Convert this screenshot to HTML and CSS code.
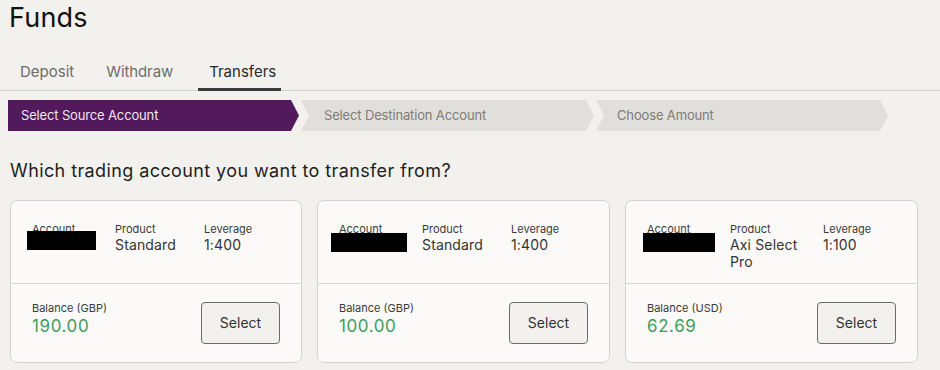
FILE: index.html
```html
<!DOCTYPE html>
<html>
<head>
<meta charset="utf-8">
<link rel="stylesheet" href="styles.css">
</head>
<body>
<div class="page">
  <h1 class="title">Funds</h1>
  <nav class="tabs">
    <span class="tab">Deposit</span>
    <span class="tab">Withdraw</span>
    <span class="tab active">Transfers</span>
  </nav>
  <div class="steps">
    <div class="step step-first active">Select Source Account</div>
    <div class="step step-mid">Select Destination Account</div>
    <div class="step step-last">Choose Amount</div>
  </div>
  <h2 class="question">Which trading account you want to transfer from?</h2>
  <div class="cards">
    <div class="card">
      <div class="card-top">
        <div class="cell acc">
          <div class="label">Account</div>
          <div class="redact redact-1"></div>
        </div>
        <div class="cell">
          <div class="label">Product</div>
          <div class="value">Standard</div>
        </div>
        <div class="cell">
          <div class="label">Leverage</div>
          <div class="value">1:400</div>
        </div>
      </div>
      <div class="card-bottom">
        <div class="balance">
          <div class="label">Balance (GBP)</div>
          <div class="amount">190.00</div>
        </div>
        <button class="select">Select</button>
      </div>
    </div>
    <div class="card">
      <div class="card-top">
        <div class="cell acc">
          <div class="label">Account</div>
          <div class="redact redact-2"></div>
        </div>
        <div class="cell">
          <div class="label">Product</div>
          <div class="value">Standard</div>
        </div>
        <div class="cell">
          <div class="label">Leverage</div>
          <div class="value">1:400</div>
        </div>
      </div>
      <div class="card-bottom">
        <div class="balance">
          <div class="label">Balance (GBP)</div>
          <div class="amount">100.00</div>
        </div>
        <button class="select">Select</button>
      </div>
    </div>
    <div class="card">
      <div class="card-top">
        <div class="cell acc">
          <div class="label">Account</div>
          <div class="redact redact-3"></div>
        </div>
        <div class="cell">
          <div class="label">Product</div>
          <div class="value">Axi Select Pro</div>
        </div>
        <div class="cell lev-wide">
          <div class="label">Leverage</div>
          <div class="value">1:100</div>
        </div>
      </div>
      <div class="card-bottom">
        <div class="balance">
          <div class="label">Balance (USD)</div>
          <div class="amount">62.69</div>
        </div>
        <button class="select">Select</button>
      </div>
    </div>
  </div>
</div>
</body>
</html>
```
FILE: styles.css
```css
* { box-sizing: border-box; }
html, body {
  margin: 0;
  padding: 0;
  background: #f2f1ed;
  font-family: "Inter", "Lato", "Liberation Sans", sans-serif;
  color: #222;
}
.page {
  width: 940px;
  height: 370px;
  overflow: hidden;
}
.title {
  margin: 0;
  padding: 2px 0 0 9px;
  font-size: 27px;
  font-weight: 400;
  line-height: 32px;
  color: #111;
  letter-spacing: 0.2px;
}
.tabs {
  display: flex;
  margin-top: 23px;
  border-bottom: 1px solid #d6d4d0;
  height: 34px;
  padding-left: 8px;
}
.tab {
  font-size: 15px;
  line-height: 30px;
  color: #6f6c69;
  padding: 0 12px;
  margin-right: 8px;
  height: 34px;
}
.tab:nth-child(2) { margin-right: 13px; letter-spacing: -0.1px; }
.tab.active {
  color: #2a2a2a;
  border-bottom: 3px solid #3a3a3a;
  padding: 0 11px;
  width: 83px;
}
.steps {
  display: flex;
  gap: 2px;
  margin: 9px 0 0 8px;
  height: 31px;
}
.step {
  height: 31px;
  font-size: 13px;
  line-height: 31px;
  letter-spacing: -0.15px;
  color: #807b77;
  background: #e0dfdb;
  padding-left: 22px;
}
.step-first {
  width: 291px;
  padding-left: 13px;
  clip-path: polygon(0 0, calc(100% - 8px) 0, 100% 50%, calc(100% - 8px) 100%, 0 100%);
}
.step.active {
  background: #52195c;
  color: #efe6ef;
}
.step-mid {
  width: 293px;
  padding-left: 23px;
  clip-path: polygon(0 0, calc(100% - 8px) 0, 100% 50%, calc(100% - 8px) 100%, 0 100%, 8px 50%);
}
.step-last {
  width: 292px;
  padding-left: 21px;
  clip-path: polygon(0 0, calc(100% - 8px) 0, 100% 50%, calc(100% - 8px) 100%, 0 100%, 8px 50%);
}
.question {
  margin: 28px 0 0 10px;
  font-size: 18px;
  font-weight: 400;
  line-height: 24px;
  color: #1e1e1e;
  letter-spacing: 0.4px;
}
.cards {
  display: grid;
  grid-template-columns: 292px 293px 293px;
  gap: 15px;
  margin: 17px 0 0 10px;
}
.card {
  background: #fbfaf8;
  border: 1px solid #d4d2ce;
  border-radius: 7px;
  height: 163px;
  display: flex;
  flex-direction: column;
}
.card-top {
  display: grid;
  grid-template-columns: 83px 89px 1fr;
  padding: 22px 0 0 21px;
  height: 83px;
  border-bottom: 1px solid #d6d4d0;
}
.cell { position: relative; }
.lev-wide { padding-left: 4px; }
.label {
  font-size: 11px;
  line-height: 13px;
  color: #3a3a3a;
}
.value {
  font-size: 14px;
  line-height: 17px;
  color: #333;
  padding-right: 14px;
  letter-spacing: 0.15px;
}
.redact {
  position: absolute;
  background: #000;
  height: 19px;
}
.redact-1 { left: -5px; top: 8px; width: 69px; }
.redact-2 { left: -8px; top: 10px; width: 76px; }
.redact-3 { left: -4px; top: 10px; width: 72px; }
.card-bottom {
  flex: 1;
  display: flex;
  align-items: center;
  justify-content: space-between;
  padding: 0 21px 0 21px;
}
.balance { margin-top: -8px; }
.amount {
  font-size: 17px;
  line-height: 20px;
  color: #3f9a60;
  letter-spacing: 0.6px;
  margin-top: 1px;
}
.select {
  width: 79px;
  height: 42px;
  background: #f2f1ed;
  border: 1px solid #6b6b6b;
  border-radius: 4px;
  font-family: inherit;
  font-size: 14px;
  color: #333;
  padding: 0;
  margin-top: -1px;
}
```
